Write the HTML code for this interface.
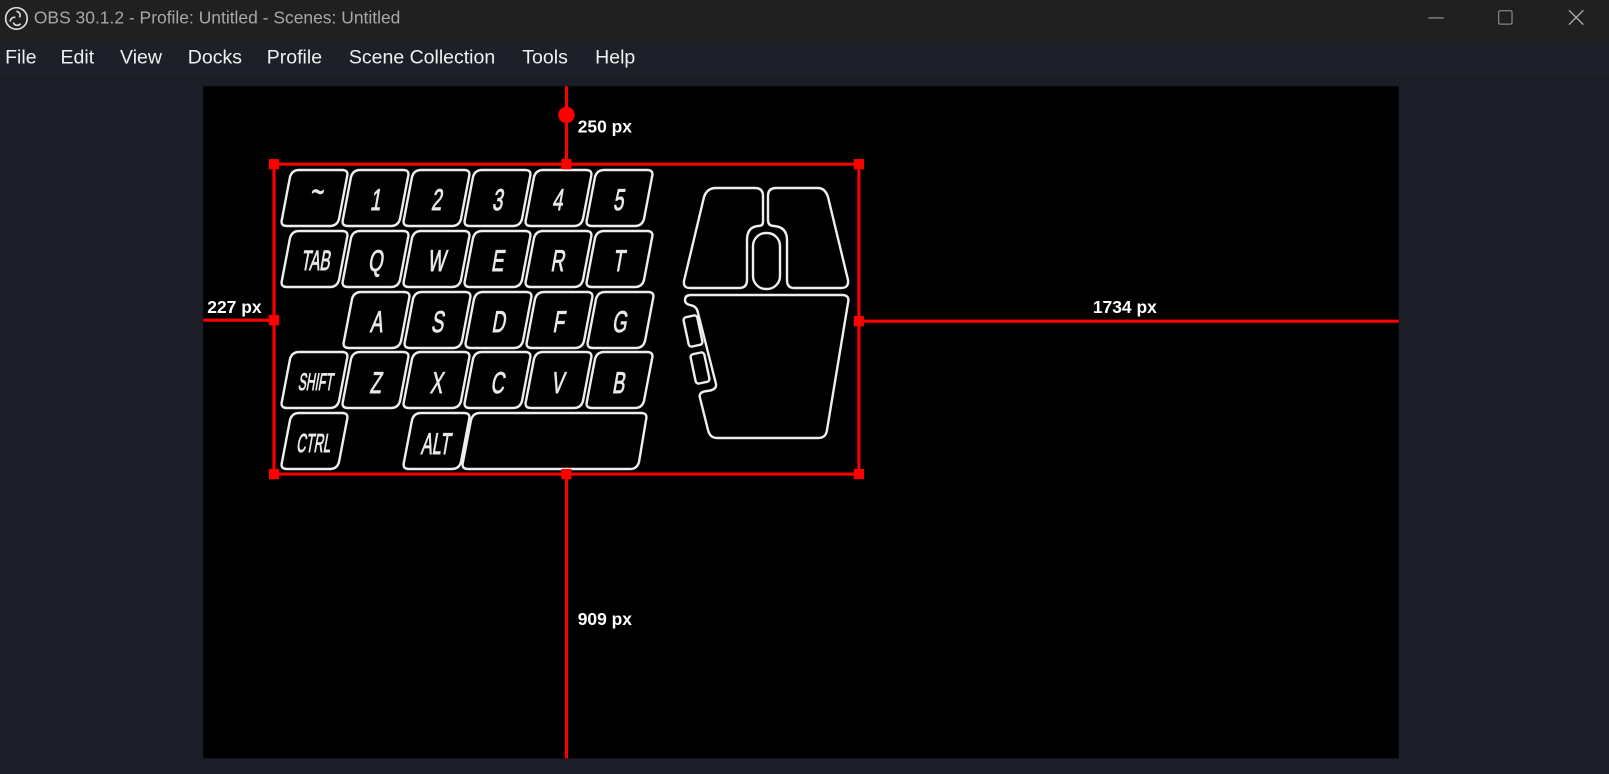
<!DOCTYPE html>
<html><head><meta charset="utf-8"><style>
html,body{margin:0;padding:0;width:1609px;height:773px;overflow:hidden;background:#1b1d27;font-family:"Liberation Sans",sans-serif}
#w{position:absolute;left:0;top:0;width:1568px;height:754px;transform:scale(1.02615);transform-origin:0 0}
.title{position:absolute;left:0;top:0;width:1568px;height:38.5px;background:#202020;color:#a8a8a8;font-size:17px}
.menu{position:absolute;left:0;top:38.5px;width:1568px;height:35px;background:#1e2029;color:#f0f0f0;font-size:19px}
.menu span{position:absolute;top:7px}
</style></head><body>
<div id="w">
<div class="title">
<svg style="position:absolute;left:4px;top:6px" width="24" height="24" viewBox="0 0 24 24"><circle cx="12" cy="12" r="10.5" fill="none" stroke="#ddd" stroke-width="1.6"/><path d="M12 5a4 4 0 0 1 3 6M6 15a4 4 0 0 1 5-4M16 17a4 4 0 0 1-7-1" fill="none" stroke="#ddd" stroke-width="1.6"/></svg>
<span style="position:absolute;left:33px;top:8px">OBS 30.1.2 - Profile: Untitled - Scenes: Untitled</span>
<div style="position:absolute;left:1392px;top:17px;width:15px;height:1px;background:#aaa"></div>
<div style="position:absolute;left:1460px;top:10px;width:12px;height:12px;border:1.5px solid #999;border-radius:2px"></div>
<svg style="position:absolute;left:1528px;top:9px" width="16" height="16"><path d="M1 1L15 15M15 1L1 15" stroke="#aaa" stroke-width="1.3"/></svg>
</div>
<div class="menu">
<span style="left:5px">File</span><span style="left:59px">Edit</span><span style="left:117px">View</span><span style="left:183px">Docks</span><span style="left:260px">Profile</span><span style="left:340px">Scene Collection</span><span style="left:509px">Tools</span><span style="left:580px">Help</span>
</div>
<div style="position:absolute;left:198px;top:84px;width:1165px;height:655px;background:#000"></div>
<svg style="position:absolute;left:0;top:0" width="1568" height="754">
<defs>
<path id="k" d="M299 170H342Q349 170 347 177L339 219Q337 226 330 226H287Q280 226 282 219L290 177Q292 170 299 170Z"/>
</defs>
<g transform="scale(0.97452)">
<g fill="none" stroke="#eee" stroke-width="2.4" stroke-linejoin="round">
<g id="row"><use href="#k"/><use href="#k" x="61"/><use href="#k" x="122"/><use href="#k" x="183"/><use href="#k" x="244"/><use href="#k" x="305"/></g>
<use href="#row" y="61"/>
<g transform="translate(1,122)"><use href="#k" x="61"/><use href="#k" x="122"/><use href="#k" x="183"/><use href="#k" x="244"/><use href="#k" x="305"/></g>
<use href="#row" y="182"/>
<g transform="translate(0,243)"><use href="#k"/><use href="#k" x="122"/><path d="M480 170H641Q648 170 646 177L639 219Q637 226 630 226H468Q461 226 463 219L471 177Q473 170 480 170Z"/></g>
<path d="M716 188H755Q763 188 763 196V222Q763 226 758 226Q747 227 747 240V280Q747 288 739 288H690Q683 288 684 281L704 197Q707 188 716 188Z"/>
<path d="M776 188H818Q825 188 828 197L848 280Q849 288 841 288H794Q787 288 787 280V240Q787 227 774 226Q768 226 768 220V196Q768 188 776 188Z"/>
<rect x="753" y="233" width="27" height="56" rx="13"/>
<path d="M691 295H842Q850 295 848 303L827 430Q826 438 818 438H717Q710 438 708 430L700 398Q698 392 707 391Q717 390 716 384L698 313Q697 306 690 305Q685 304 685 300Q685 295 691 295Z"/>
<rect x="686" y="316" width="14" height="30" rx="3" transform="rotate(-12 693 331)"/><rect x="693" y="353" width="14" height="30" rx="3" transform="rotate(-12 700 368)"/>
</g>
<g fill="#e8e8e8" stroke="#e8e8e8" stroke-width="0.9" font-family="Liberation Sans,sans-serif" font-size="30" text-anchor="middle">
<g transform="translate(316,203) skewX(-10) scale(0.65,1)"><text font-size="34">~</text></g>
<g transform="translate(375,210) skewX(-10) scale(0.62,1)"><text>1</text></g>
<g transform="translate(436,210) skewX(-10) scale(0.62,1)"><text>2</text></g>
<g transform="translate(497,210) skewX(-10) scale(0.62,1)"><text>3</text></g>
<g transform="translate(557,210) skewX(-10) scale(0.62,1)"><text>4</text></g>
<g transform="translate(618,210) skewX(-10) scale(0.62,1)"><text>5</text></g>
<g transform="translate(315,270) skewX(-10) scale(0.55,1)"><text font-size="28">TAB</text></g>
<g transform="translate(375,271) skewX(-10) scale(0.62,1)"><text>Q</text></g>
<g transform="translate(436,271) skewX(-10) scale(0.62,1)"><text>W</text></g>
<g transform="translate(497,271) skewX(-10) scale(0.62,1)"><text>E</text></g>
<g transform="translate(557,271) skewX(-10) scale(0.62,1)"><text>R</text></g>
<g transform="translate(618,271) skewX(-10) scale(0.62,1)"><text>T</text></g>
<g transform="translate(376,332) skewX(-10) scale(0.62,1)"><text>A</text></g>
<g transform="translate(437,332) skewX(-10) scale(0.62,1)"><text>S</text></g>
<g transform="translate(498,332) skewX(-10) scale(0.62,1)"><text>D</text></g>
<g transform="translate(558,332) skewX(-10) scale(0.62,1)"><text>F</text></g>
<g transform="translate(619,332) skewX(-10) scale(0.62,1)"><text>G</text></g>
<g transform="translate(315,390) skewX(-10) scale(0.5,1)"><text font-size="24">SHIFT</text></g>
<g transform="translate(375,393) skewX(-10) scale(0.62,1)"><text>Z</text></g>
<g transform="translate(436,393) skewX(-10) scale(0.62,1)"><text>X</text></g>
<g transform="translate(497,393) skewX(-10) scale(0.62,1)"><text>C</text></g>
<g transform="translate(557,393) skewX(-10) scale(0.62,1)"><text>V</text></g>
<g transform="translate(618,393) skewX(-10) scale(0.62,1)"><text>B</text></g>
<g transform="translate(313,452) skewX(-10) scale(0.5,1)"><text font-size="26">CTRL</text></g>
<g transform="translate(435,454) skewX(-10) scale(0.55,1)"><text font-size="30">ALT</text></g>
</g>
</g>
<g stroke="#f00" stroke-width="3" fill="none">
<rect x="267" y="160" width="570" height="302"/>
<path d="M552 84V160M552 462V739M198 312H267M837 313H1363"/>
</g>
<g fill="#f00">
<circle cx="552" cy="112" r="8"/>
<rect x="262" y="155" width="10" height="10"/><rect x="547" y="155" width="10" height="10"/><rect x="832" y="155" width="10" height="10"/>
<rect x="262" y="307" width="10" height="10"/><rect x="832" y="308" width="10" height="10"/>
<rect x="262" y="457" width="10" height="10"/><rect x="547" y="457" width="10" height="10"/><rect x="832" y="457" width="10" height="10"/>
</g>
<g fill="#fff" font-weight="bold" font-size="17" font-family="Liberation Sans,sans-serif">
<text x="563" y="129">250 px</text><text x="202" y="305">227 px</text><text x="1065" y="305">1734 px</text><text x="563" y="609">909 px</text>
</g>
</svg>
</div>
</body></html>
